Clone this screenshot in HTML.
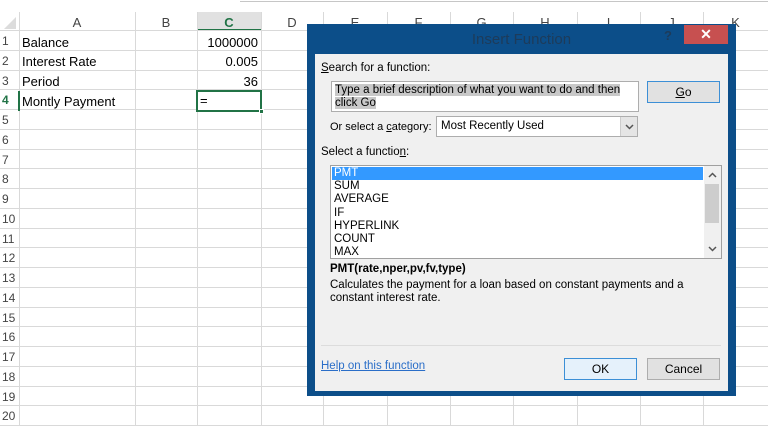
<!DOCTYPE html>
<html><head><style>
*{margin:0;padding:0;box-sizing:border-box}
body{width:768px;height:426px;overflow:hidden;background:#fff;font-family:"Liberation Sans",Arial,sans-serif;position:relative;font-size:11.5px;color:#000}
.a{position:absolute}
.vl{position:absolute;width:1px;background:#d9d9d9}
.hl{position:absolute;height:1px;background:#d9d9d9}
.ch{position:absolute;top:13px;height:19px;text-align:center;color:#444;font-size:13px;line-height:19px}
.rh{position:absolute;left:0;width:19px;color:#444;font-size:12px;padding-left:2px}
.cell{position:absolute;font-size:13px;line-height:20px}
.btn{position:absolute;border:1px solid #adadad;background:#e1e1e1;text-align:center;font-size:12px;line-height:20px}
</style></head><body>
<div class="a" style="left:240px;top:0;width:528px;height:2px;border-bottom:1px solid #c6c6c6"></div>
<div class="a" style="left:0;top:12px;width:768px;height:19px;background:#fff;border-bottom:1px solid #c6c6c6"></div>
<div class="a" style="left:197px;top:12px;width:64px;height:19px;background:#e1e1e1;border-bottom:2px solid #217346"></div>
<div class="a" style="left:4px;top:17px;width:0;height:0;border-left:12px solid transparent;border-bottom:12px solid #dcdcdc"></div>
<div id="g"></div>
<div class="ch" style="left:19px;width:116px">A</div>
<div class="ch" style="left:135px;width:62px">B</div>
<div class="ch" style="left:197px;width:64px;color:#217346;font-weight:bold">C</div>
<div class="ch" style="left:261px;width:62px">D</div>
<div class="ch" style="left:323px;width:64px">E</div>
<div class="ch" style="left:387px;width:63px">F</div>
<div class="ch" style="left:450px;width:63px">G</div>
<div class="ch" style="left:513px;width:64px">H</div>
<div class="ch" style="left:577px;width:63px">I</div>
<div class="ch" style="left:640px;width:63px">J</div>
<div class="ch" style="left:703px;width:65px">K</div>
<div class="cell" style="left:22px;top:33px">Balance</div>
<div class="cell" style="left:22px;top:52px">Interest Rate</div>
<div class="cell" style="left:22px;top:72px">Period</div>
<div class="cell" style="left:22px;top:92px">Montly Payment</div>
<div class="cell" style="left:197px;top:33px;width:61px;text-align:right">1000000</div>
<div class="cell" style="left:197px;top:52px;width:61px;text-align:right">0.005</div>
<div class="cell" style="left:197px;top:72px;width:61px;text-align:right">36</div>
<div class="a" style="left:196px;top:90px;width:66px;height:22px;border:2px solid #217346;background:#fff;font-size:13px;line-height:18px;padding-left:2px">=</div>
<div class="a" style="left:259px;top:109px;width:5px;height:5px;background:#217346;border:1px solid #fff"></div>
<div class="a" style="left:18px;top:91px;width:2px;height:20px;background:#217346"></div>

<div class="a" style="left:307px;top:24px;width:429px;height:372px;background:#0c4e89"></div>
<div class="a" style="left:307px;top:29px;width:429px;text-align:center;font-size:15px;color:#1d3b5a;line-height:22px">Insert Function</div>
<div class="a" style="left:664px;top:28px;color:#1d3b5a;font-weight:bold;font-size:13px">?</div>
<div class="a" style="left:684px;top:25px;width:44px;height:19px;background:#c75050;color:#fff;text-align:center;font-size:14px;line-height:19px;font-weight:bold">✕</div>
<div class="a" style="left:315px;top:54px;width:413px;height:337px;background:#f0f0f0"></div>
<div class="a" style="left:321px;top:62px"><u>S</u>earch for a function:</div>
<div class="a" style="left:331px;top:81px;width:308px;height:31px;background:#fff;border:1px solid #adadad;padding:2px 3px;line-height:13px"><span style="background:#c8c8c8">Type a brief description of what you want to do and then click Go</span></div>
<div class="btn" style="left:647px;top:81px;width:73px;height:22px;border-color:#3c8fd6;line-height:20px"><u>G</u>o</div>
<div class="a" style="left:330px;top:121px;font-size:11px">Or select a <u>c</u>ategory:</div>
<div class="a" style="left:436px;top:116px;width:202px;height:21px;background:#fff;border:1px solid #adadad;padding-left:4px;line-height:19px">Most Recently Used</div>
<div class="a" style="left:620px;top:117px;width:17px;height:19px;background:#e5e5e5;border-left:1px solid #ccc"><svg width="17" height="19"><path d="M5 8l3.5 3.5L12 8" stroke="#555" stroke-width="1.5" fill="none"/></svg></div>
<div class="a" style="left:321px;top:146px">Select a functio<u>n</u>:</div>
<div class="a" style="left:330px;top:165px;width:392px;height:94px;background:#fff;border:1px solid #a0a0a0"></div>
<div class="a" style="left:332px;top:167px;width:371px;height:13px;background:#3399ff"></div>
<div class="a" style="left:334px;top:167px;font-size:11.5px;line-height:13.2px">
<span style="color:#fff">PMT</span><br>SUM<br>AVERAGE<br>IF<br>HYPERLINK<br>COUNT<br>MAX</div>
<div class="a" style="left:704px;top:166px;width:17px;height:92px;background:#f0f0f0"></div>
<div class="a" style="left:705px;top:184px;width:14px;height:39px;background:#cdcdcd"></div>
<div class="a" style="left:704px;top:168px"><svg width="17" height="14"><path d="M5 9l3.5-3.5L12 9" stroke="#555" stroke-width="1.5" fill="none"/></svg></div>
<div class="a" style="left:704px;top:242px"><svg width="17" height="14"><path d="M5 5l3.5 3.5L12 5" stroke="#555" stroke-width="1.5" fill="none"/></svg></div>
<div class="a" style="left:330px;top:263px;font-weight:bold;font-size:11.5px">PMT(rate,nper,pv,fv,type)</div>
<div class="a" style="left:330px;top:279px;font-size:11.5px;line-height:13px;width:380px">Calculates the payment for a loan based on constant payments and a constant interest rate.</div>
<div class="a" style="left:321px;top:345px;width:400px;height:1px;background:#dcdcdc"></div>
<div class="a" style="left:321px;top:360px;color:#2a6ec8;text-decoration:underline;font-size:11.5px">Help on this function</div>
<div class="btn" style="left:564px;top:358px;width:73px;height:22px;border-color:#3c8fd6;background:#e5f1fb">OK</div>
<div class="btn" style="left:647px;top:358px;width:73px;height:22px">Cancel</div>
<script>
var g=document.getElementById('g'),h='';
var xs=[19,135,197,261,323,387,450,513,577,640,703];
xs.forEach(function(x){h+='<div class="vl" style="left:'+x+'px;top:12px;height:414px"></div>';});
for(var n=1;n<=21;n++){var t=Math.round(31+19.75*(n-1));
h+='<div class="hl" style="left:0;top:'+(t-1)+'px;width:768px"></div>';
if(n<=20)h+='<div class="rh" style="top:'+(t+3)+'px;'+(n==4?'color:#217346;font-weight:bold;':'')+'">'+n+'</div>';}
g.innerHTML=h;
</script>
</body></html>
